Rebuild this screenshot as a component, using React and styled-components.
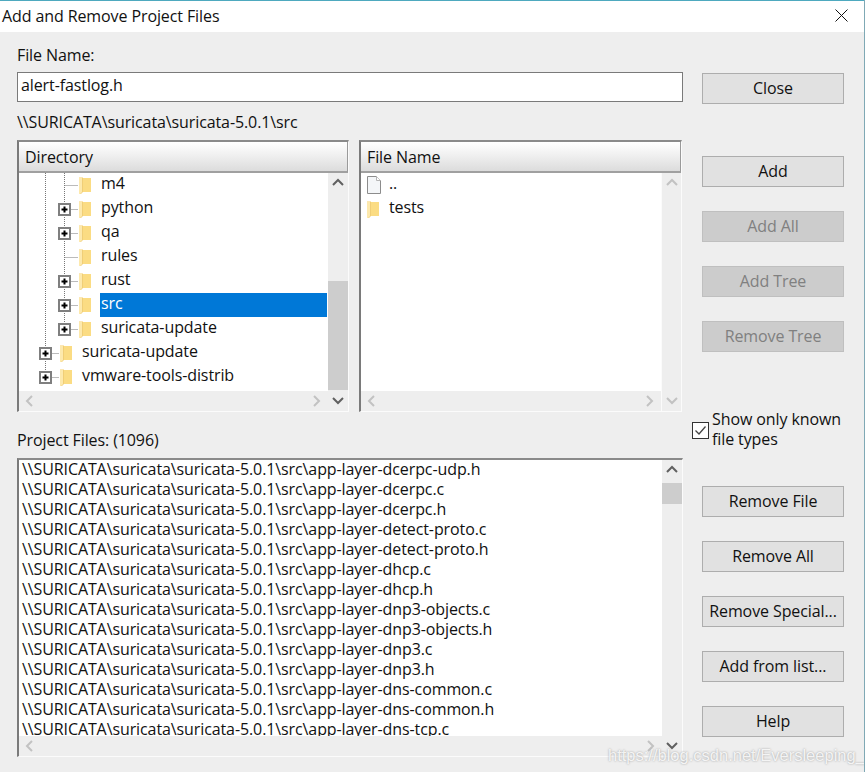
import React from "react";
import styled, { createGlobalStyle } from "styled-components";

const Global = createGlobalStyle`
  html, body { margin: 0; padding: 0; background: #eeeeee; }
  * { box-sizing: border-box; }
`;

const Window = styled.div`
  position: relative;
  width: 865px;
  height: 772px;
  overflow: hidden;
  background: #eeeeee;
  border-right: 1px solid #7fa9b5;
  font-family: "Open Sans", "Noto Sans", sans-serif;
  font-size: 16px;
  line-height: 20px;
  color: #111;
  letter-spacing: -0.1px;
`;
const TitleBar = styled.header`
  height: 32px;
  display: flex;
  align-items: center;
  justify-content: space-between;
  background: #fff;
  border-top: 1px solid #4ea9bf;
  padding: 0 16px 2px 2px;
`;
const Body = styled.main`
  display: flex;
  padding-left: 17px;
  gap: 9px;
`;
const LeftColumn = styled.section`
  width: 666px;
  display: flex;
  flex-direction: column;
`;
const RightColumn = styled.aside`
  width: 152px;
  display: flex;
  flex-direction: column;
`;
const Label = styled.div`
  margin-top: ${(p) => p.$top}px;
  height: 20px;
  white-space: nowrap;
`;
const NameInput = styled.div`
  margin-top: ${(p) => p.$top}px;
  height: 30px;
  background: #fff;
  border: 1px solid #7a7a7a;
  padding: 2px 3px;
`;
const Panels = styled.div`
  margin-top: ${(p) => p.$top}px;
  height: 272px;
  display: grid;
  grid-template-columns: 332px 323px;
  column-gap: 10px;
`;
const Panel = styled.div`
  display: grid;
  grid-template-rows: ${(p) => (p.$noHeader ? "1fr" : "31px 1fr")};
  border-top: 2px solid #8a8a8a;
  border-left: 2px solid #7a7a7a;
  border-right: 1px solid #fbfbfb;
  border-bottom: 1px solid #fbfbfb;
  width: ${(p) => (p.$width ? `${p.$width}px` : "auto")};
  height: ${(p) => (p.$height ? `${p.$height}px` : "auto")};
  margin-top: ${(p) => p.$top || 0}px;
  min-height: 0;
  overflow: hidden;
`;
const Header = styled.div`
  display: flex;
  align-items: center;
  padding-left: 6px;
  background: linear-gradient(#ffffff, #f0f0f0 45%, #dcdcdc);
  border-bottom: 2px solid #a0a0a0;
  border-right: 1px solid #9a9a9a;
`;
const ListArea = styled.div`
  display: grid;
  grid-template-columns: 1fr 20px;
  grid-template-rows: 1fr 20px;
  min-height: 0;
  overflow: hidden;
`;
const Content = styled.div`
  background: #fff;
  overflow: hidden;
  min-width: 0;
  min-height: 0;
`;
const VBar = styled.div`
  grid-column: 2;
  grid-row: 1 / 3;
  display: flex;
  flex-direction: column;
  background: #eeeeee;
  border-left: ${(p) => (p.$split ? "1px solid #fbfbfb" : "0")};
`;
const HBar = styled.div`
  display: flex;
  align-items: center;
  justify-content: space-between;
  background: #eeeeee;
  padding: 0 5px;
`;
const ArrowCell = styled.div`
  height: 20px;
  flex: none;
  display: flex;
  align-items: center;
  justify-content: center;
`;
const Track = styled.div`
  flex: 1;
  min-height: 0;
`;
const Thumb = styled.div`
  height: ${(p) => p.$h}px;
  margin-top: ${(p) => p.$top}px;
  background: #cdcdcd;
`;
const TreeRow = styled.div`
  height: 24px;
  display: flex;
  align-items: center;
  white-space: nowrap;
`;
const TreeGutter = styled.svg`
  flex: none;
  display: block;
`;
const TreeText = styled.div`
  height: 24px;
  line-height: 21px;
  padding-left: 1px;
  flex: ${(p) => (p.$selected ? 1 : "none")};
  margin-right: ${(p) => (p.$selected ? "1px" : "0")};
  background: ${(p) => (p.$selected ? "#0078d7" : "transparent")};
  color: ${(p) => (p.$selected ? "#fff" : "inherit")};
`;
const FileRow = styled.div`
  height: 24px;
  display: flex;
  align-items: center;
  padding-left: 6px;
`;
const FileText = styled.span`
  padding-bottom: 4px;
`;
const IconSlot = styled.span`
  flex: none;
  width: 22px;
`;
const ProjectRow = styled.div`
  height: 20px;
  line-height: 18px;
  padding-left: 3px;
  white-space: nowrap;
`;
const Button = styled.div`
  flex: none;
  width: 142px;
  height: 31px;
  margin-left: 10px;
  margin-top: ${(p) => p.$top}px;
  padding-bottom: 2px;
  display: flex;
  align-items: center;
  justify-content: center;
  white-space: nowrap;
  background: ${(p) => (p.$disabled ? "#cccccc" : "#e1e1e1")};
  border: 1px solid ${(p) => (p.$disabled ? "#bfbfbf" : "#adadad")};
  color: ${(p) => (p.$disabled ? "#808080" : "#111")};
`;
const CheckRow = styled.label`
  margin-top: 58px;
  display: flex;
  align-items: center;
  gap: 3px;
  height: 40px;
`;
const CheckBox = styled.span`
  flex: none;
  width: 17px;
  height: 17px;
  background: #fff;
  border: 1px solid #333;
  display: flex;
  align-items: center;
  justify-content: center;
`;
const CheckText = styled.span`
  padding-bottom: 2px;
`;
const Watermark = styled.div`
  position: absolute;
  left: 608px;
  top: 745px;
  font-family: "Liberation Sans", Arial, sans-serif;
  font-size: 16.5px;
  letter-spacing: 0;
  color: rgba(255, 255, 255, 0.85);
  text-shadow: 0 0 2px rgba(140, 140, 140, 0.9);
  white-space: nowrap;
`;

const Chevron = ({ dir, active }) => {
  const pts = {
    up: "1,8 6,3 11,8",
    down: "1,3 6,8 11,3",
    left: "8,1 3,6 8,11",
    right: "3,1 8,6 3,11",
  }[dir];
  return (
    <svg width="12" height="12" viewBox="0 0 12 12">
      <polyline points={pts} fill="none" stroke={active ? "#606060" : "#c2c2c2"} strokeWidth="2" />
    </svg>
  );
};

const FolderShape = () => (
  <>
    <path d="M3 1h9v14H3z" fill="#fbdc83" />
    <path d="M0 0.5h4v1H0z" fill="#f6cf6c" />
    <path d="M0 1h3.5v14L1.5 17H0z" fill="#fde9ad" />
    <path d="M3.5 1v14L1.5 17" fill="none" stroke="#ecc96f" strokeWidth="0.8" />
  </>
);

const Folder = () => (
  <svg width="12" height="17" viewBox="0 0 12 17" style={{ display: "block" }}>
    <FolderShape />
  </svg>
);

const DocIcon = () => (
  <svg width="14" height="18" viewBox="0 0 14 18" style={{ display: "block" }}>
    <path d="M0.5 0.5h9l4 4v13h-13z" fill="#f4f6f8" stroke="#8c8c8c" />
    <path d="M9.5 0.5v4h4" fill="#fff" stroke="#b5b5b5" />
  </svg>
);

/* connector lines and expander box of one tree row */
const Gutter = ({ level, expand, rootLine, subLine, subEnd }) => {
  const x = level === 0 ? 26 : 45;
  const width = level === 0 ? 62 : 81;
  return (
    <TreeGutter width={width} height="24" viewBox={`0 0 ${width} 24`}>
      {rootLine && (
        <line x1="26.5" y1="0" x2="26.5" y2={rootLine === "end" ? 12 : 24} stroke="#777" strokeDasharray="1 1" />
      )}
      {subLine && (
        <line x1="45.5" y1="0" x2="45.5" y2={subEnd ? 12 : 24} stroke="#777" strokeDasharray="1 1" />
      )}
      <line x1={x + 0.5} y1="12.5" x2={x + 14} y2="12.5" stroke="#777" strokeDasharray="1 1" />
      {expand && (
        <g>
          <rect x={x - 5} y="7" width="11" height="11" fill="#fff" stroke="#7f7f7f" strokeWidth="2" />
          <path d={`M${x - 2.5} 12.5h6M${x + 0.5} 9.5v6`} stroke="#000" strokeWidth="2" />
        </g>
      )}
      <svg x={x + 15} y="4" width="12" height="17" viewBox="0 0 12 17">
        <FolderShape />
      </svg>
    </TreeGutter>
  );
};

const tree = [
  { name: "m4", level: 1, expand: false },
  { name: "python", level: 1, expand: true },
  { name: "qa", level: 1, expand: true },
  { name: "rules", level: 1, expand: false },
  { name: "rust", level: 1, expand: true },
  { name: "src", level: 1, expand: true, selected: true },
  { name: "suricata-update", level: 1, expand: true, subEnd: true },
  { name: "suricata-update", level: 0, expand: true },
  { name: "vmware-tools-distrib", level: 0, expand: true, rootEnd: true },
];

const prefix = "\\\\SURICATA\\suricata\\suricata-5.0.1\\src\\";
const files = [
  "app-layer-dcerpc-udp.h",
  "app-layer-dcerpc.c",
  "app-layer-dcerpc.h",
  "app-layer-detect-proto.c",
  "app-layer-detect-proto.h",
  "app-layer-dhcp.c",
  "app-layer-dhcp.h",
  "app-layer-dnp3-objects.c",
  "app-layer-dnp3-objects.h",
  "app-layer-dnp3.c",
  "app-layer-dnp3.h",
  "app-layer-dns-common.c",
  "app-layer-dns-common.h",
  "app-layer-dns-tcp.c",
];

const VScroll = ({ active, thumbTop, thumbH, split }) => (
  <VBar $split={split}>
    <ArrowCell><Chevron dir="up" active={active} /></ArrowCell>
    <Track>{thumbH ? <Thumb $top={thumbTop} $h={thumbH} /> : null}</Track>
    <ArrowCell><Chevron dir="down" active={active} /></ArrowCell>
  </VBar>
);
const HScroll = () => (
  <HBar>
    <Chevron dir="left" />
    <Chevron dir="right" />
  </HBar>
);

export default function App() {
  return (
    <Window>
      <Global />
      <TitleBar>
        <span>Add and Remove Project Files</span>
        <svg width="13" height="13" viewBox="0 0 13 13">
          <path d="M0.5 0.5l12 12M12.5 0.5l-12 12" stroke="#111" strokeWidth="1" fill="none" />
        </svg>
      </TitleBar>
      <Body>
        <LeftColumn>
          <Label $top={13}>File Name:</Label>
          <NameInput $top={7}>alert-fastlog.h</NameInput>
          <Label $top={10}>\\SURICATA\suricata\suricata-5.0.1\src</Label>
          <Panels $top={8}>
            <Panel>
              <Header>Directory</Header>
              <ListArea>
                <Content>
                  {tree.map((t, i) => (
                    <TreeRow key={i}>
                      <Gutter
                        level={t.level}
                        expand={t.expand}
                        rootLine={t.rootEnd ? "end" : true}
                        subLine={t.level === 1}
                        subEnd={t.subEnd}
                      />
                      <TreeText $selected={t.selected}>{t.name}</TreeText>
                    </TreeRow>
                  ))}
                </Content>
                <VScroll active thumbTop={88} thumbH={109} />
                <HScroll />
              </ListArea>
            </Panel>
            <Panel>
              <Header>File Name</Header>
              <ListArea>
                <Content>
                  <FileRow><IconSlot><DocIcon /></IconSlot><FileText>..</FileText></FileRow>
                  <FileRow><IconSlot><Folder /></IconSlot><FileText>tests</FileText></FileRow>
                </Content>
                <VScroll split />
                <HScroll />
              </ListArea>
            </Panel>
          </Panels>
          <Label $top={18}>Project Files: (1096)</Label>
          <Panel $noHeader $top={8} $height={299} $width={666}>
            <ListArea>
              <Content>
                {files.map((f) => (
                  <ProjectRow key={f}>{prefix + f}</ProjectRow>
                ))}
              </Content>
              <VScroll active thumbTop={3} thumbH={21} />
              <HScroll />
            </ListArea>
          </Panel>
        </LeftColumn>
        <RightColumn>
          <Button $top={41}>Close</Button>
          <Button $top={52}>Add</Button>
          <Button $top={24} $disabled>Add All</Button>
          <Button $top={24} $disabled>Add Tree</Button>
          <Button $top={24} $disabled>Remove Tree</Button>
          <CheckRow>
            <CheckBox>
              <svg width="13" height="11" viewBox="0 0 13 11">
                <polyline points="1.5,5.5 5,9 11.5,1.5" fill="none" stroke="#444" strokeWidth="1.3" />
              </svg>
            </CheckBox>
            <CheckText>Show only known<br />file types</CheckText>
          </CheckRow>
          <Button $top={36}>Remove File</Button>
          <Button $top={24}>Remove All</Button>
          <Button $top={24}>Remove Special...</Button>
          <Button $top={24}>Add from list...</Button>
          <Button $top={24}>Help</Button>
        </RightColumn>
      </Body>
      <Watermark>https://blog.csdn.net/Eversleeping_</Watermark>
    </Window>
  );
}
